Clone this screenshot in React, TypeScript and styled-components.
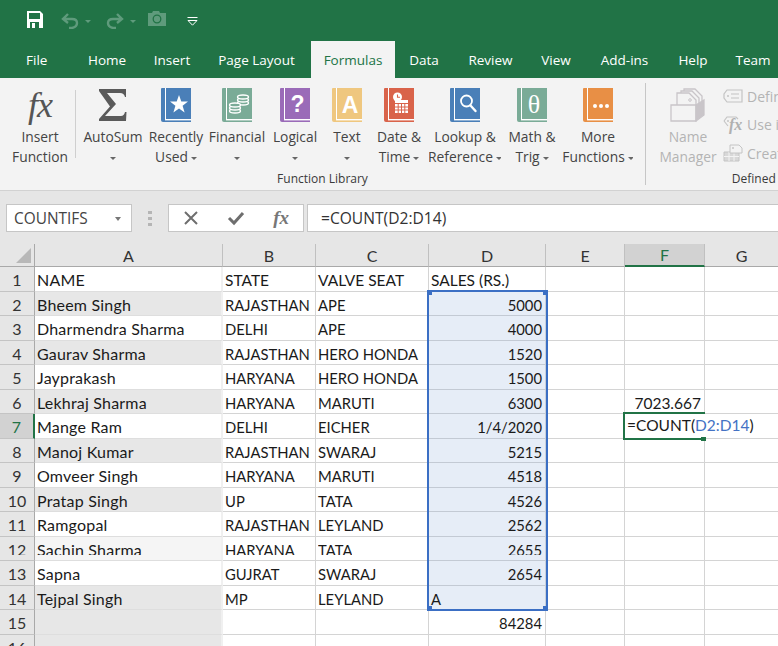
import React from 'react';
import styled, { createGlobalStyle } from 'styled-components';

const GlobalStyle = createGlobalStyle`
  html, body { margin: 0; padding: 0; background: #fff; }
  #root { width: 778px; height: 646px; overflow: hidden; }
  svg { display: block; }
`;

const UI_FONT = `"Open Sans", "Noto Sans", sans-serif`;
const CELL_FONT = `Lato, "Open Sans", sans-serif`;

const tabs = [
  { label: 'File', w: 73.5 },
  { label: 'Home', w: 67 },
  { label: 'Insert', w: 63 },
  { label: 'Page Layout', w: 106 },
  { label: 'Formulas', w: 84, active: true },
  { label: 'Data', w: 58 },
  { label: 'Review', w: 75 },
  { label: 'View', w: 56 },
  { label: 'Add-ins', w: 81 },
  { label: 'Help', w: 56 },
  { label: 'Team', w: 64 },
];

const columns = ['A', 'B', 'C', 'D', 'E', 'F', 'G'];

const rows = [
  ['NAME', 'STATE', 'VALVE SEAT', 'SALES (RS.)'],
  ['Bheem Singh', 'RAJASTHAN', 'APE', '5000'],
  ['Dharmendra Sharma', 'DELHI', 'APE', '4000'],
  ['Gaurav Sharma', 'RAJASTHAN', 'HERO HONDA', '1520'],
  ['Jayprakash', 'HARYANA', 'HERO HONDA', '1500'],
  ['Lekhraj Sharma', 'HARYANA', 'MARUTI', '6300'],
  ['Mange Ram', 'DELHI', 'EICHER', '1/4/2020'],
  ['Manoj Kumar', 'RAJASTHAN', 'SWARAJ', '5215'],
  ['Omveer Singh', 'HARYANA', 'MARUTI', '4518'],
  ['Pratap Singh', 'UP', 'TATA', '4526'],
  ['Ramgopal', 'RAJASTHAN', 'LEYLAND', '2562'],
  ['Sachin Sharma', 'HARYANA', 'TATA', '2655'],
  ['Sapna', 'GUJRAT', 'SWARAJ', '2654'],
  ['Tejpal Singh', 'MP', 'LEYLAND', 'A'],
  ['', '', '', '84284'],
  ['', '', '', ''],
];

const bandOf = (row: number) => {
  if (row === 12) return '#f5f5f5';
  if (row >= 14) return '#e7e7e7';
  return row % 2 === 0 ? '#e7e7e7' : '#ffffff';
};

const Book = ({ color, children }: { color: string; children?: React.ReactNode }) => (
  <svg width="30" height="34" viewBox="0 0 30 34">
    <path d="M1 0H30V34H2Q0 34 0 32V1Q0 0 1 0Z" fill={color} />
    <rect x="4" y="0" width="1" height="31" fill="#fff" />
    <rect x="4" y="31" width="26" height="1.4" fill="#fff" />
    {children}
  </svg>
);

const GlyphText = styled.text`
  font-family: "Liberation Sans", sans-serif;
  font-weight: 700;
  fill: #fff;
`;

const ThetaText = styled.text`
  font-family: "Liberation Serif", serif;
  fill: #fff;
`;

const icons = {
  sigma: (
    <svg width="30" height="34" viewBox="0 0 30 34">
      <path d="M1 1H28V9H27Q26 5 22 5H9L18 16 7 28H23Q26 28 27 24H28.500L28 33H1V31L12 18.500 1 3Z" fill="#5a5a5a" />
    </svg>
  ),
  star: (
    <Book color="#4a7fb8">
      <path d="M18 7L20.300 13.600H27L21.600 17.700 23.600 24.500 18 20.400 12.400 24.500 14.400 17.700 9 13.600H15.700Z" fill="#fff" />
    </Book>
  ),
  coins: (
    <Book color="#7aab97">
      <g fill="#7aab97" stroke="#fff" strokeWidth="1.3">
        <ellipse cx="21" cy="15" rx="5.500" ry="2" />
        <ellipse cx="21" cy="12" rx="5.500" ry="2" />
        <ellipse cx="21" cy="9" rx="5.500" ry="2" />
        <ellipse cx="13" cy="23" rx="5.500" ry="2" />
        <ellipse cx="13" cy="20" rx="5.500" ry="2" />
        <ellipse cx="13" cy="17" rx="5.500" ry="2" />
      </g>
    </Book>
  ),
  logical: (
    <Book color="#9a6bb8">
      <GlyphText x="17.500" y="24" fontSize="23" textAnchor="middle">?</GlyphText>
    </Book>
  ),
  text: (
    <Book color="#efc77f">
      <GlyphText x="18" y="25" fontSize="23" textAnchor="middle">A</GlyphText>
    </Book>
  ),
  date: (
    <Book color="#d9634a">
      <circle cx="13.500" cy="9" r="4.500" fill="#fff" />
      <path d="M13.500 6.500V9.300H16" stroke="#d9634a" strokeWidth="1.1" fill="none" />
      <path d="M11 12H24V25H11Z" fill="#fff" />
      <path d="M11 15.500H24M11 19H24M11 22H24M14.200 15V25M17.500 15V25M20.800 15V25" stroke="#d9634a" strokeWidth="1" />
    </Book>
  ),
  lookup: (
    <Book color="#4a7fb8">
      <circle cx="16.500" cy="13" r="5.500" fill="none" stroke="#fff" strokeWidth="1.800" />
      <path d="M20.500 17.500L25.500 23" stroke="#fff" strokeWidth="2.400" strokeLinecap="round" />
    </Book>
  ),
  math: (
    <Book color="#7aab97">
      <ThetaText x="17" y="25" fontSize="26" textAnchor="middle">θ</ThetaText>
    </Book>
  ),
  more: (
    <Book color="#e88f45">
      <circle cx="12" cy="18" r="2" fill="#fff" />
      <circle cx="18" cy="18" r="2" fill="#fff" />
      <circle cx="24" cy="18" r="2" fill="#fff" />
    </Book>
  ),
  manager: (
    <svg width="36" height="34" viewBox="0 0 36 34">
      <g fill="#f3f3f3" stroke="#c9c5c9" strokeWidth="1.300">
        <path d="M14 1H25L32 8V20H14Z" />
        <path d="M11 3H22L29 10V22H11Z" />
        <path d="M7 5H19L26 12V24H7Z" />
        <path d="M1 17H26V33H1Z" />
        <path d="M26 17L34 12V27L26 33Z" fill="#c9c5c9" />
      </g>
      <circle cx="20" cy="12" r="1.300" fill="none" stroke="#c9c5c9" />
    </svg>
  ),
  define: (
    <svg width="20" height="14" viewBox="0 0 20 14">
      <path d="M4 1H19V13H4L1 9V5Z" fill="none" stroke="#c4c4c4" strokeWidth="1.200" />
      <circle cx="5" cy="7" r="1" fill="#c4c4c4" />
      <path d="M8 5H16M8 9H16" stroke="#c4c4c4" strokeWidth="1.200" />
    </svg>
  ),
  use: (
    <svg width="20" height="18" viewBox="0 0 20 18">
      <path d="M1 5L4 1H13L15 3" fill="none" stroke="#c4c4c4" strokeWidth="1.200" />
      <path d="M1 5L5 10" fill="none" stroke="#c4c4c4" strokeWidth="1.200" />
      <circle cx="5" cy="5" r="1" fill="#c4c4c4" />
    </svg>
  ),
  create: (
    <svg width="20" height="18" viewBox="0 0 20 18">
      <path d="M1 8H16V17H1Z" fill="#d8d8d8" stroke="#c4c4c4" />
      <path d="M1 12.500H16M6 8V17M11 8V17" stroke="#f3f3f3" />
      <path d="M7 1H16L19 4V9H7Z" fill="#f3f3f3" stroke="#c4c4c4" />
      <circle cx="10" cy="4" r="1" fill="#c4c4c4" />
    </svg>
  ),
};

const buttons = [
  { w: 60, icon: icons.sigma, top: 'AutoSum', bottom: '', clip: true },
  { w: 62, icon: icons.star, top: 'Recently', bottom: 'Used' },
  { w: 56, icon: icons.coins, top: 'Financial', bottom: '' },
  { w: 56, icon: icons.logical, top: 'Logical', bottom: '' },
  { w: 44, icon: icons.text, top: 'Text', bottom: '' },
  { w: 56, icon: icons.date, top: 'Date &', bottom: 'Time' },
  { w: 72, icon: icons.lookup, top: 'Lookup &', bottom: 'Reference' },
  { w: 58, icon: icons.math, top: 'Math &', bottom: 'Trig' },
  { w: 70, icon: icons.more, top: 'More', bottom: 'Functions' },
];

const App: React.FC = () => {
  return (
    <Window>
      <GlobalStyle />
      <TitleBar>
        <QuickAccess>
          <svg width="16" height="17" viewBox="0 0 16 17">
            <path d="M0 0H13L16 3V17H0Z" fill="#fff" />
            <rect x="2" y="2" width="11" height="6" fill="#217346" />
            <rect x="3" y="11" width="9" height="6" fill="#217346" />
            <rect x="5" y="12" width="3" height="5" fill="#fff" />
          </svg>
          <UndoSlot>
            <svg width="18" height="16" viewBox="0 0 18 16">
              <path d="M7 1L2 6 7 10M2 6H11Q16 6 16 10T11 15H8" fill="none" stroke="#5f9b7c" strokeWidth="2.400" />
            </svg>
            <MiniCaret />
          </UndoSlot>
          <RedoSlot>
            <svg width="18" height="16" viewBox="0 0 18 16">
              <path d="M11 1L16 6 11 10M16 6H7Q2 6 2 10T7 15H10" fill="none" stroke="#5f9b7c" strokeWidth="2.400" />
            </svg>
            <MiniCaret />
          </RedoSlot>
          <CameraSlot>
            <svg width="18" height="15" viewBox="0 0 18 15">
              <path d="M0 2H4L5 0H11L12 2H18V15H0Z" fill="#5f9b7c" />
              <circle cx="9" cy="8" r="3.800" fill="none" stroke="#217346" strokeWidth="1.300" />
            </svg>
          </CameraSlot>
          <CustomizeSlot>
            <svg width="11" height="9" viewBox="0 0 11 9">
              <path d="M0.500 0.500H10.500M1 3.500H10L5.500 8.200Z" fill="none" stroke="#fff" strokeWidth="1" />
            </svg>
          </CustomizeSlot>
        </QuickAccess>
        <TabRow>
          {tabs.map((tab) => (
            <Tab key={tab.label} $w={tab.w} $active={tab.active}>{tab.label}</Tab>
          ))}
        </TabRow>
      </TitleBar>

      <Ribbon>
        <LibraryGroup>
          <GroupBody>
            <RibbonButton $w={70}>
              <IconSlot><FxMark>fx</FxMark></IconSlot>
              <ButtonLine>Insert</ButtonLine>
              <ButtonLine>Function</ButtonLine>
            </RibbonButton>
            <InnerSeparator />
            {buttons.map((b) => (
              <RibbonButton key={b.top} $w={b.w}>
                <IconSlot>{b.icon}</IconSlot>
                <ButtonLine $clip={b.clip}>{b.top}</ButtonLine>
                <ButtonLine>{b.bottom}{b.bottom && ' '}<Caret /></ButtonLine>
              </RibbonButton>
            ))}
          </GroupBody>
          <GroupLabel>Function Library</GroupLabel>
        </LibraryGroup>
        <GroupSeparator />
        <NamesGroup>
          <GroupBody>
            <RibbonButton $w={66} $off>
              <IconSlot>{icons.manager}</IconSlot>
              <ButtonLine>Name</ButtonLine>
              <ButtonLine>Manager</ButtonLine>
            </RibbonButton>
            <SmallColumn>
              <SmallItem><SmallIcon>{icons.define}</SmallIcon>Define Name</SmallItem>
              <SmallItem><SmallIcon><FxTag>fx</FxTag>{icons.use}</SmallIcon>Use in Formula</SmallItem>
              <SmallItem><SmallIcon>{icons.create}</SmallIcon>Create from Selection</SmallItem>
            </SmallColumn>
          </GroupBody>
          <GroupLabel>Defined Names</GroupLabel>
        </NamesGroup>
      </Ribbon>

      <FormulaBar>
        <NameBox>COUNTIFS<NameCaret /></NameBox>
        <Grip />
        <FormulaButtons>
          <svg width="16" height="16" viewBox="0 0 16 16">
            <path d="M2 2L14 14M14 2L2 14" stroke="#6e6e6e" strokeWidth="2" />
          </svg>
          <svg width="18" height="16" viewBox="0 0 18 16">
            <path d="M2 8L7 13 16 3" fill="none" stroke="#6e6e6e" strokeWidth="3" />
          </svg>
          <FxSmall>fx</FxSmall>
        </FormulaButtons>
        <FormulaInput>=COUNT(D2:D14)</FormulaInput>
      </FormulaBar>

      <Sheet>
        <Corner><CornerMark /></Corner>
        {columns.map((c) => (
          <ColumnHead key={c} $active={c === 'F'}>{c}</ColumnHead>
        ))}
        {rows.map((row, i) => {
          const n = i + 1;
          const selected = n >= 2 && n <= 14;
          const caps = n > 1;
          return (
            <React.Fragment key={n}>
              <RowHead $active={n === 7}>
                <CellText $clip={n === 12}>{n}</CellText>
              </RowHead>
              <NameCell style={{ background: bandOf(n) }}>
                <CellText $clip={n === 12}>{row[0]}</CellText>
              </NameCell>
              <Cell $caps={caps}><CellText $clip={n === 12}>{row[1]}</CellText></Cell>
              <Cell $caps={caps}><CellText $clip={n === 12}>{row[2]}</CellText></Cell>
              <Cell $caps={caps} $selected={selected} $right={n !== 1 && row[3] !== 'A'}>
                <CellText $clip={n === 12}>{row[3]}</CellText>
              </Cell>
              <Cell />
              <Cell $right>{n === 6 && <CellText>7023.667</CellText>}</Cell>
              <Cell />
            </React.Fragment>
          );
        })}
        <Selection>
          <Handle $corner="tl" />
          <Handle $corner="tr" />
          <Handle $corner="bl" />
          <Handle $corner="br" />
        </Selection>
        <ActiveCell>
          =COUNT(<RefText>D2:D14</RefText>)<TextCursor />
          <FillHandle />
        </ActiveCell>
      </Sheet>
    </Window>
  );
};

export default App;

const Window = styled.div`
  width: 778px;
  height: 646px;
  overflow: hidden;
  display: flex;
  flex-direction: column;
  background: #e6e6e6;
  font-family: ${UI_FONT};
`;

const TitleBar = styled.div`
  flex: none;
  height: 78px;
  background: #217346;
  display: flex;
  flex-direction: column;
`;

const QuickAccess = styled.div`
  height: 41px;
  flex: none;
  padding: 11px 0 0 27px;
  box-sizing: border-box;
  display: flex;
  align-items: flex-start;
`;

const UndoSlot = styled.div`
  display: flex;
  align-items: center;
  gap: 6px;
  margin: 2px 0 0 18px;
`;

const RedoSlot = styled(UndoSlot)`
  margin-left: 15px;
`;

const CameraSlot = styled.div`
  margin-left: 12px;
`;

const CustomizeSlot = styled.div`
  margin: 6px 0 0 21px;
`;

const MiniCaret = styled.span`
  width: 0;
  height: 0;
  border-left: 3px solid transparent;
  border-right: 3px solid transparent;
  border-top: 3px solid #5f9b7c;
`;

const TabRow = styled.div`
  flex: 1;
  display: flex;
  white-space: nowrap;
`;

const Tab = styled.div<{ $w: number; $active?: boolean }>`
  flex: none;
  width: ${(p) => p.$w}px;
  margin-left: ${(p) => (p.$active ? '1.5px' : '0')};
  display: flex;
  align-items: center;
  justify-content: center;
  font-size: 13.5px;
  color: ${(p) => (p.$active ? '#217346' : '#fff')};
  background: ${(p) => (p.$active ? '#f3f3f3' : 'transparent')};
`;

const Ribbon = styled.div`
  flex: none;
  height: 113px;
  box-sizing: border-box;
  background: #f3f3f3;
  border-bottom: 1px solid #d2d2d2;
  display: flex;
  color: #444;
`;

const LibraryGroup = styled.div`
  flex: none;
  width: 645px;
  display: flex;
  flex-direction: column;
`;

const NamesGroup = styled.div`
  flex: none;
  width: 254px;
  padding-left: 4px;
  box-sizing: border-box;
  display: flex;
  flex-direction: column;
`;

const GroupBody = styled.div`
  flex: 1;
  display: flex;
  gap: 2px;
  padding-left: 5px;
  align-items: flex-start;
`;

const GroupLabel = styled.div`
  height: 21px;
  line-height: 20px;
  font-size: 12px;
  text-align: center;
  color: #3a3a3a;
  white-space: nowrap;
`;

const InnerSeparator = styled.div`
  flex: none;
  width: 1px;
  height: 68px;
  margin: 12px 5px 0 -2px;
  background: #cfcfcf;
`;

const GroupSeparator = styled.div`
  flex: none;
  width: 1px;
  height: 102px;
  margin-top: 5px;
  background: #c6c6c6;
`;

const RibbonButton = styled.div<{ $w: number; $off?: boolean }>`
  flex: none;
  width: ${(p) => p.$w}px;
  padding-top: 10px;
  display: flex;
  flex-direction: column;
  align-items: center;
  color: ${(p) => (p.$off ? '#b4b4b4' : '#444')};
  overflow: hidden;
`;

const IconSlot = styled.div`
  height: 39px;
  display: flex;
  justify-content: center;
  align-items: flex-start;
`;

const FxMark = styled.span`
  font-family: "Liberation Serif", serif;
  font-style: italic;
  font-size: 36px;
  line-height: 34px;
  letter-spacing: -1px;
  color: #555;
`;

const ButtonLine = styled.div<{ $clip?: boolean }>`
  height: 20px;
  line-height: 20px;
  font-size: 13.8px;
  white-space: nowrap;
  display: flex;
  align-items: center;
  justify-content: center;
  gap: 3px;
  width: ${(p) => (p.$clip ? '60px' : 'auto')};
  overflow: ${(p) => (p.$clip ? 'hidden' : 'visible')};
`;

const Caret = styled.span`
  width: 0;
  height: 0;
  border-left: 3px solid transparent;
  border-right: 3px solid transparent;
  border-top: 3px solid #666;
  margin-top: 2px;
`;

const SmallColumn = styled.div`
  padding-top: 4px;
  width: 60px;
  color: #b4b4b4;
  font-size: 14px;
`;

const SmallItem = styled.div`
  height: 28.5px;
  display: flex;
  align-items: center;
  white-space: nowrap;
`;

const SmallIcon = styled.div`
  position: relative;
  flex: none;
  width: 24px;
  display: flex;
  align-items: center;
`;

const FxTag = styled.span`
  position: absolute;
  left: 6px;
  top: 0;
  font-family: "Liberation Serif", serif;
  font-style: italic;
  font-weight: 700;
  font-size: 16px;
  line-height: 18px;
  color: #b0b0b0;
`;

const FormulaBar = styled.div`
  flex: none;
  height: 53px;
  box-sizing: border-box;
  padding: 13px 0 12px 6px;
  display: flex;
  align-items: stretch;
`;

const NameBox = styled.div`
  flex: none;
  position: relative;
  width: 126px;
  box-sizing: border-box;
  border: 1px solid #c6c6c6;
  background: #fff;
  padding-left: 7px;
  display: flex;
  align-items: center;
  font-size: 15.4px;
  color: #444;
`;

const NameCaret = styled.span`
  position: absolute;
  right: 10px;
  top: 12px;
  width: 0;
  height: 0;
  border-left: 3.5px solid transparent;
  border-right: 3.5px solid transparent;
  border-top: 4px solid #777;
`;

const Grip = styled.div`
  flex: none;
  width: 4px;
  margin: 7px 16px 6px 16px;
  background: repeating-linear-gradient(#b5b5b5 0 3px, transparent 3px 6px);
`;

const FormulaButtons = styled.div`
  flex: none;
  width: 136px;
  box-sizing: border-box;
  border: 1px solid #c6c6c6;
  background: #fff;
  padding: 0 14px;
  display: flex;
  align-items: center;
  justify-content: space-between;
`;

const FxSmall = styled.span`
  font-family: "Liberation Serif", serif;
  font-style: italic;
  font-weight: 700;
  font-size: 19px;
  color: #777;
`;

const FormulaInput = styled.div`
  flex: 1;
  margin-left: 3px;
  margin-right: -4px;
  box-sizing: border-box;
  border: 1px solid #c6c6c6;
  background: #fff;
  padding-left: 13px;
  display: flex;
  align-items: center;
  font-size: 15.6px;
  color: #333;
`;

const Sheet = styled.div`
  flex: 1;
  position: relative;
  overflow: hidden;
  display: grid;
  grid-template-columns: 35px 188px 93px 113px 117px 79px 80px 74px;
  grid-template-rows: 23px repeat(16, 24.5px);
  font-family: ${CELL_FONT};
  font-size: 15.5px;
  color: #1a1a1a;
  background: #fff;
`;

const Corner = styled.div`
  position: relative;
  background: #e6e6e6;
  border-right: 1px solid #a9a9a9;
  border-bottom: 1px solid #a9a9a9;
`;

const CornerMark = styled.span`
  position: absolute;
  right: 3px;
  bottom: 3px;
  width: 0;
  height: 0;
  border-left: 15px solid transparent;
  border-bottom: 15px solid #b8b8b8;
`;

const ColumnHead = styled.div<{ $active?: boolean }>`
  box-sizing: border-box;
  display: flex;
  align-items: center;
  justify-content: center;
  font-size: 16px;
  color: ${(p) => (p.$active ? '#217346' : '#333')};
  background: ${(p) => (p.$active ? '#d2d2d2' : '#e6e6e6')};
  border-right: 1px solid #c0c0c0;
  border-bottom: ${(p) => (p.$active ? '2px solid #217346' : '1px solid #a9a9a9')};
`;

const RowHead = styled.div<{ $active?: boolean }>`
  box-sizing: border-box;
  display: flex;
  justify-content: center;
  font-size: 16px;
  color: ${(p) => (p.$active ? '#217346' : '#333')};
  background: ${(p) => (p.$active ? '#d2d2d2' : '#e6e6e6')};
  border-right: ${(p) => (p.$active ? '2px solid #217346' : '1px solid #a9a9a9')};
  border-bottom: 1px solid #c4c4c4;
`;

const CellText = styled.span<{ $clip?: boolean }>`
  display: block;
  line-height: 26px;
  white-space: nowrap;
  height: ${(p) => (p.$clip ? '18px' : 'auto')};
  overflow: ${(p) => (p.$clip ? 'hidden' : 'visible')};
`;

const NameCell = styled.div`
  box-sizing: border-box;
  padding-left: 2px;
  font-size: 16px;
  letter-spacing: 0.2px;
  border-right: 2px solid #f0f0f0;
  border-bottom: 1px solid #dedede;
`;

const Cell = styled.div<{ $selected?: boolean; $right?: boolean; $caps?: boolean }>`
  box-sizing: border-box;
  padding: 0 3px 0 2px;
  display: flex;
  font-size: ${(p) => (p.$caps ? '14.8px' : 'inherit')};
  justify-content: ${(p) => (p.$right ? 'flex-end' : 'flex-start')};
  background: ${(p) => (p.$selected ? '#e6edf7' : '#fff')};
  border-right: 1px solid ${(p) => (p.$selected ? '#c9d0da' : '#d4d4d4')};
  border-bottom: 1px solid ${(p) => (p.$selected ? '#c3cad4' : '#d4d4d4')};
`;

const Selection = styled.div`
  grid-column: 5 / 6;
  grid-row: 3 / 16;
  position: absolute;
  inset: -2px -2px -1px -2px;
  border: 2px solid #3b6fc4;
  pointer-events: none;
`;

const Handle = styled.span<{ $corner: 'tl' | 'tr' | 'bl' | 'br' }>`
  position: absolute;
  width: 5px;
  height: 5px;
  background: #3b6fc4;
  ${(p) => (p.$corner[0] === 't' ? 'top: -2px;' : 'bottom: -2px;')}
  ${(p) => (p.$corner[1] === 'l' ? 'left: -2px;' : 'right: -2px;')}
`;

const ActiveCell = styled.div`
  grid-column: 7 / 8;
  grid-row: 8 / 9;
  position: absolute;
  inset: -2px 0 -1px -2px;
  border: solid #217346;
  border-width: 2px 0 2px 2px;
  padding-left: 2px;
  line-height: 21px;
  white-space: nowrap;
  background: #fff;
  display: flex;
  align-items: center;
`;

const RefText = styled.span`
  color: #4472c4;
`;

const TextCursor = styled.span`
  width: 1px;
  height: 20px;
  background: #000;
`;

const FillHandle = styled.span`
  position: absolute;
  right: -1px;
  bottom: -3px;
  width: 5px;
  height: 4px;
  background: #217346;
`;
